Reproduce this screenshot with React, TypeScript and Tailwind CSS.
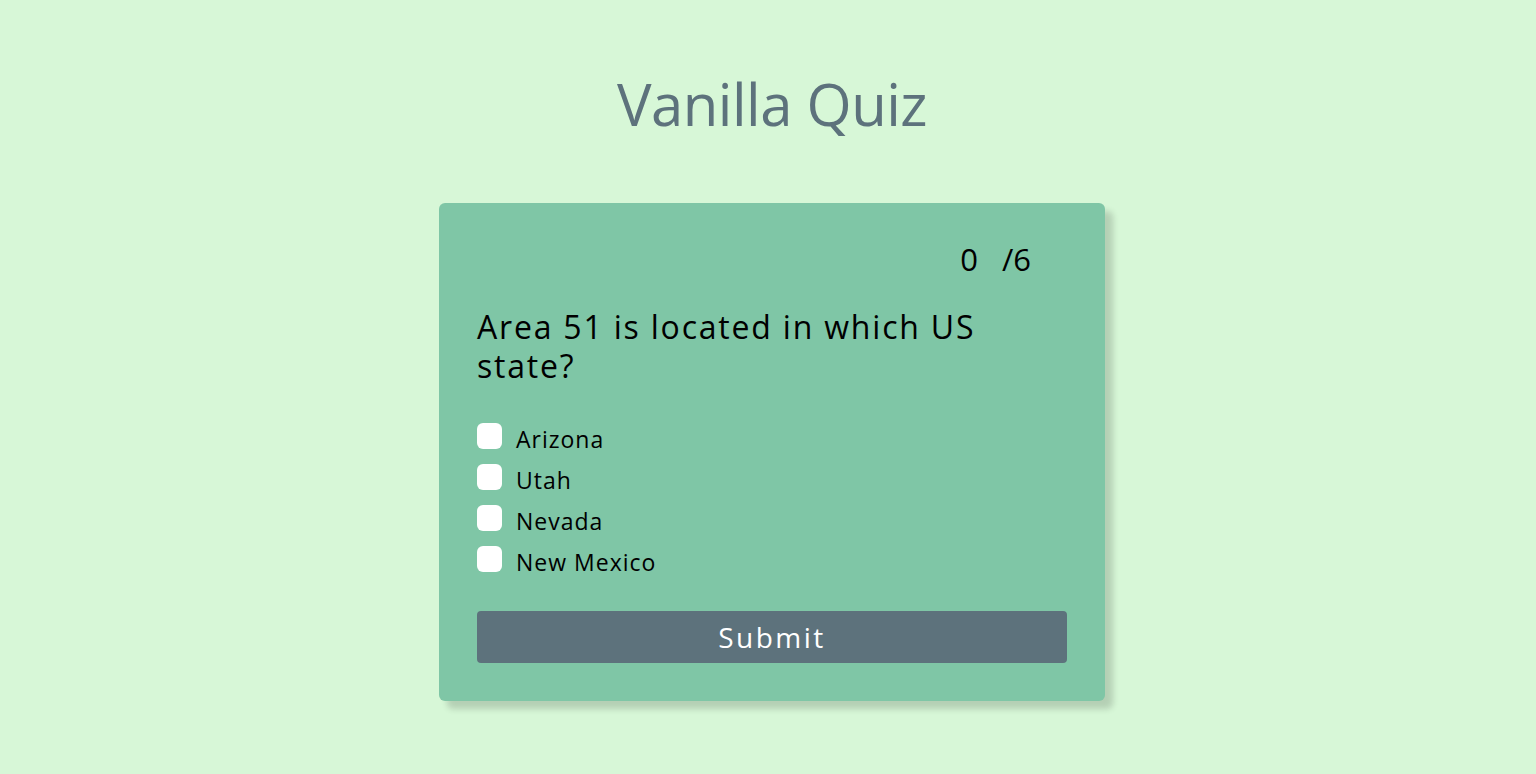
import React, { useState } from 'react';

const options = ['Arizona', 'Utah', 'Nevada', 'New Mexico'];

const App = () => {
  const [checked, setChecked] = useState<string | null>(null);

  return (
    <div className="min-h-screen w-full bg-[#d7f7d7] pl-[8px] flex flex-col items-center font-['Open_Sans','Liberation_Sans',sans-serif]">
      <h1 className="mt-[68px] text-[58px] leading-[72px] text-[#5d727c] tracking-[-0.5px]">Vanilla Quiz</h1>

      <div className="mt-[63px] w-[666px] rounded-md bg-[#7fc6a6] shadow-[8px_8px_6px_rgba(0,0,0,0.16)] px-[38px] pt-[36px] pb-[38px]">
        {/* score */}
        <div className="flex justify-end pr-[36px] text-[31px] leading-[40px] text-black">
          <span>0</span>
          <span className="ml-[24px]">/6</span>
        </div>

        <h2 className="mt-[28px] max-w-[530px] text-[32px] leading-[39px] text-black tracking-[1.8px]">
          Area 51 is located in which US state?
        </h2>

        <div className="mt-[38px] flex flex-col gap-[9px]">
          {options.map(opt => (
            <label key={opt} className="flex items-start gap-[14px] cursor-pointer">
              <span
                onClick={() => setChecked(opt)}
                className="w-[25px] h-[26px] rounded-[6px] bg-white flex items-center justify-center"
              >
                {checked === opt && <span className="w-[11px] h-[11px] rounded-sm bg-[#5d727c]" />}
              </span>
              <span className="text-[23px] leading-[32px] text-black tracking-[1px]">{opt}</span>
            </label>
          ))}
        </div>

        <button className="mt-[33px] w-full h-[52px] rounded-[4px] bg-[#5d727c] text-white text-[28px] tracking-[2.5px]">
          Submit
        </button>
      </div>
    </div>
  );
};

export default App;
